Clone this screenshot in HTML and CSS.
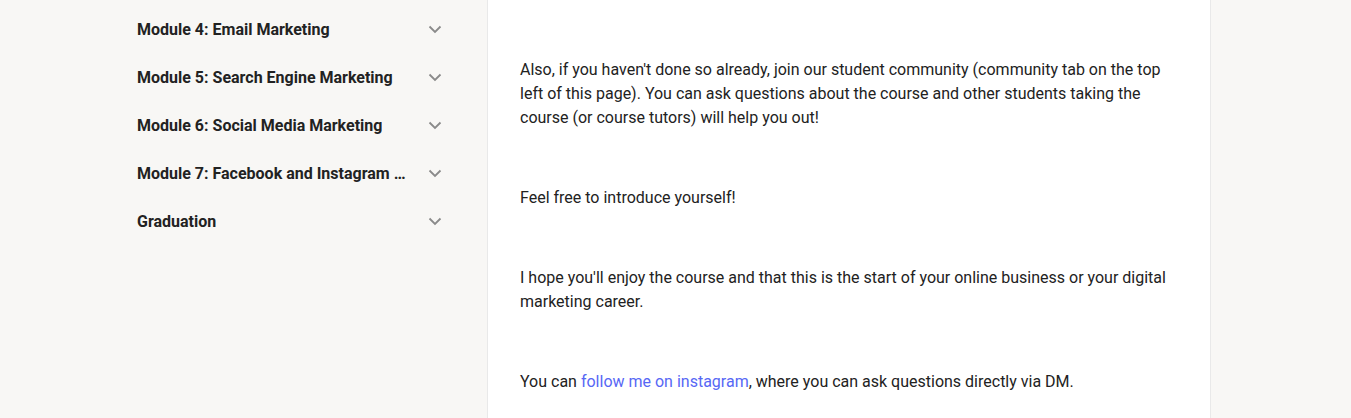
FILE: index.html
```html
<!DOCTYPE html>
<html lang="en">
<head>
<meta charset="utf-8">
<title>Course</title>
<link rel="stylesheet" href="styles.css">
</head>
<body>
<div class="page">
  <aside class="sidebar">
    <ul class="modules">
      <li class="module"><span class="module-title">Module 4: Email Marketing</span><svg class="chev" width="14" height="9" viewBox="0 0 14 9"><path d="M1.5 1.5 L7 7 L12.5 1.5" fill="none" stroke="#8a8a8a" stroke-width="1.8"/></svg></li>
      <li class="module"><span class="module-title">Module 5: Search Engine Marketing</span><svg class="chev" width="14" height="9" viewBox="0 0 14 9"><path d="M1.5 1.5 L7 7 L12.5 1.5" fill="none" stroke="#8a8a8a" stroke-width="1.8"/></svg></li>
      <li class="module"><span class="module-title">Module 6: Social Media Marketing</span><svg class="chev" width="14" height="9" viewBox="0 0 14 9"><path d="M1.5 1.5 L7 7 L12.5 1.5" fill="none" stroke="#8a8a8a" stroke-width="1.8"/></svg></li>
      <li class="module"><span class="module-title">Module 7: Facebook and Instagram Marketing</span><svg class="chev" width="14" height="9" viewBox="0 0 14 9"><path d="M1.5 1.5 L7 7 L12.5 1.5" fill="none" stroke="#8a8a8a" stroke-width="1.8"/></svg></li>
      <li class="module"><span class="module-title">Graduation</span><svg class="chev" width="14" height="9" viewBox="0 0 14 9"><path d="M1.5 1.5 L7 7 L12.5 1.5" fill="none" stroke="#8a8a8a" stroke-width="1.8"/></svg></li>
    </ul>
  </aside>
  <main class="content">
    <p>Also, if you haven't done so already, join our student community (community tab on the top left of this page). You can ask questions about the course and other students taking the course (or course tutors) will help you out!</p>
    <p>Feel free to introduce yourself!</p>
    <p>I hope you'll enjoy the course and that this is the start of your online business or your digital marketing career.</p>
    <p>You can <a href="#">follow me on instagram</a>, where you can ask questions directly via DM.</p>
  </main>
  <div class="filler"></div>
</div>
</body>
</html>
```

FILE: styles.css
```css
html, body {
  margin: 0;
  padding: 0;
  background: #f8f7f5;
  font-family: Roboto, "Liberation Sans", Arial, sans-serif;
  color: #222222;
}
.page {
  display: flex;
  min-height: 418px;
  height: 418px;
  overflow: hidden;
}
.sidebar {
  width: 487px;
  flex: 0 0 487px;
  box-sizing: border-box;
  padding: 5px 45px 0 137px;
  background: #f8f7f5;
}
.modules {
  list-style: none;
  margin: 0;
  padding: 0;
}
.module {
  display: flex;
  align-items: center;
  justify-content: space-between;
  height: 48px;
  gap: 20px;
}
.module-title {
  font-size: 16px;
  font-weight: 700;
  color: #222222;
  white-space: nowrap;
  overflow: hidden;
  text-overflow: ellipsis;
  max-width: 272px;
}
.chev {
  flex: 0 0 auto;
  display: block;
}
.content {
  width: 724px;
  flex: 0 0 724px;
  box-sizing: border-box;
  background: #ffffff;
  border-left: 1px solid #e9e9e9;
  border-right: 1px solid #e9e9e9;
  padding: 58px 40px 0 32px;
}
.content p {
  margin: 0 0 56px;
  font-size: 16px;
  line-height: 24px;
  color: #222222;
}
.content a {
  color: #5767f5;
  text-decoration: none;
}
.filler {
  flex: 1;
  background: #f8f7f5;
}
```
